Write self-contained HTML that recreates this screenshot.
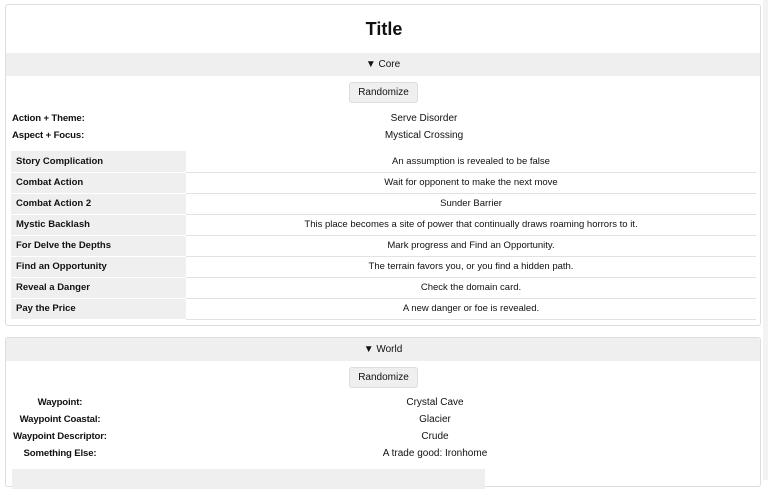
<!DOCTYPE html>
<html><head><style>
body{margin:0;width:768px;height:480px;overflow:hidden;background:#fff;font-family:"Liberation Sans",sans-serif;font-size:10px;color:#111;position:relative}
.p{position:absolute;left:5px;width:756px;border:1px solid #ddd;border-radius:3px;background:#fff;box-sizing:border-box}
.hd{position:absolute;left:0;right:0;height:23px;background:#efefef;text-align:center;line-height:23px;font-size:10px}
.btn{position:absolute;left:343px;width:69px;height:21px;background:#efefef;border:1px solid #ddd;border-radius:3px;box-sizing:border-box;text-align:center;line-height:19px}
.t{position:absolute;white-space:nowrap;line-height:12px}
.b{font-weight:bold;font-size:9.6px;letter-spacing:-0.15px}
.c{transform:translateX(-50%)}
table{position:absolute;left:5px;top:146px;width:745px;border-collapse:collapse}
td{height:21px;padding:0;border-bottom:1px solid #e2e2e2;box-sizing:border-box;font-size:9.5px}
td:first-child{width:175px;background:#efefef;font-weight:bold;padding-left:5px;border-bottom:1px solid #fff}
td:last-child{text-align:center}
</style></head><body>
<div style="position:absolute;right:0;top:0;width:5px;height:480px;background:#f3f3f3"></div>
<div class="p" style="top:4px;height:322px">
 <div class="t c" style="left:378px;top:14px;font-size:18px;line-height:20px;font-weight:bold">Title</div>
 <div class="hd" style="top:48px">▼ Core</div>
 <div class="btn" style="top:77px">Randomize</div>
 <div class="t b" style="left:6px;top:108px">Action + Theme:</div>
 <div class="t c" style="left:418px;top:108px">Serve Disorder</div>
 <div class="t b" style="left:6px;top:125px">Aspect + Focus:</div>
 <div class="t c" style="left:418px;top:125px">Mystical Crossing</div>
 <table>
 <tr><td>Story Complication</td><td>An assumption is revealed to be false</td></tr>
 <tr><td>Combat Action</td><td>Wait for opponent to make the next move</td></tr>
 <tr><td>Combat Action 2</td><td>Sunder Barrier</td></tr>
 <tr><td>Mystic Backlash</td><td>This place becomes a site of power that continually draws roaming horrors to it.</td></tr>
 <tr><td>For Delve the Depths</td><td>Mark progress and Find an Opportunity.</td></tr>
 <tr><td>Find an Opportunity</td><td>The terrain favors you, or you find a hidden path.</td></tr>
 <tr><td>Reveal a Danger</td><td>Check the domain card.</td></tr>
 <tr><td>Pay the Price</td><td>A new danger or foe is revealed.</td></tr>
 </table>
</div>
<div class="p" style="top:337px;height:150px">
 <div class="hd" style="top:0">▼ World</div>
 <div class="btn" style="top:29px">Randomize</div>
 <div class="t b c" style="left:54px;top:59px">Waypoint:</div>
 <div class="t c" style="left:429px;top:59px">Crystal Cave</div>
 <div class="t b c" style="left:54px;top:76px">Waypoint Coastal:</div>
 <div class="t c" style="left:429px;top:76px">Glacier</div>
 <div class="t b c" style="left:54px;top:93px">Waypoint Descriptor:</div>
 <div class="t c" style="left:429px;top:93px">Crude</div>
 <div class="t b c" style="left:54px;top:110px">Something Else:</div>
 <div class="t c" style="left:429px;top:110px">A trade good: Ironhome</div>
 <div style="position:absolute;left:6px;top:131px;width:473px;height:20px;background:#efefef"></div>
</div>
</body></html>
